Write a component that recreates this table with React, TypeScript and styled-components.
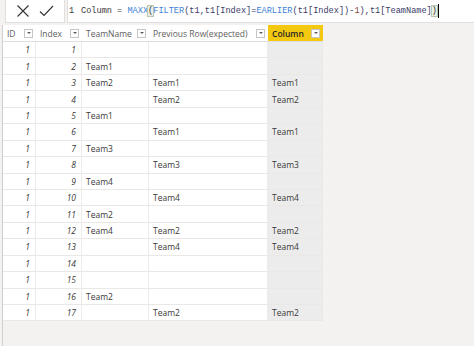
import React from "react";
import styled, { createGlobalStyle } from "styled-components";

const Global = createGlobalStyle`
  html, body { margin: 0; padding: 0; }
  body {
    background: #f3f2f1;
    font-family: "Open Sans", "Noto Sans", Arial, sans-serif;
    width: 474px;
    height: 346px;
    overflow: hidden;
  }
`;

const Page = styled.div`
  display: flex;
  flex-direction: column;
  width: 474px;
  height: 346px;
  overflow: hidden;
`;

const FormulaBar = styled.div`
  display: flex;
  align-items: stretch;
  height: 23px;
  padding-left: 5px;
  gap: 2px;
`;

const CommitBox = styled.div`
  width: 60px;
  background: #ffffff;
  border: 1px solid #e1dfdd;
  border-top: none;
  display: flex;
  align-items: center;
  justify-content: space-around;
  padding: 0 6px;
  box-sizing: border-box;
`;

const Editor = styled.div`
  flex: 1;
  background: #ffffff;
  border: 1px solid #e1dfdd;
  border-top: none;
  border-right: none;
  display: flex;
  align-items: center;
  padding-left: 1px;
  font-family: "Liberation Mono", "DejaVu Sans Mono", monospace;
  font-size: 8.6px;
  color: #3b3a39;
  white-space: pre;
`;

const LineNo = styled.span`
  width: 12px;
  color: #3b3a39;
`;

const Tok = styled.span<{ $kind?: "fn" | "ref" | "num" | "plain" }>`
  color: ${(p) =>
    p.$kind === "fn"
      ? "#3d7fd6"
      : p.$kind === "ref"
      ? "#3a3a66"
      : p.$kind === "num"
      ? "#8a4a3a"
      : "#3b3a39"};
`;

const Match = styled.span`
  background: #e9efe6;
  outline: 1px solid #b7c9b0;
`;

const Caret = styled.span`
  display: inline-block;
  width: 1px;
  height: 14px;
  background: #000;
  margin-left: 1px;
`;

const Viewport = styled.div`
  flex: 1;
  margin-top: 2px;
  margin-left: 2px;
  border-left: 1px solid #d2d0ce;
`;

const COLS = "33px 46px 67px 119px 55px";

const HeaderRow = styled.div`
  display: grid;
  grid-template-columns: ${COLS};
  height: 17px;
  background: #ffffff;
  width: 320px;
`;

const HeaderCell = styled.div<{ $selected?: boolean }>`
  display: flex;
  align-items: center;
  justify-content: space-between;
  padding: 0 3px 0 4px;
  box-sizing: border-box;
  font-size: 8.5px;
  color: ${(p) => (p.$selected ? "#252423" : "#605e5c")};
  background: ${(p) => (p.$selected ? "#f2c811" : "#ffffff")};
  font-weight: ${(p) => (p.$selected ? 600 : 400)};
  border-bottom: 1px solid #e1dfdd;
  white-space: nowrap;
`;

const Drop = styled.span`
  width: 9px;
  height: 9px;
  box-sizing: border-box;
  border: 1px solid #c8c6c4;
  background: #ffffff;
  display: flex;
  align-items: center;
  justify-content: center;
  flex: none;
  &::after {
    content: "";
    border-left: 2px solid transparent;
    border-right: 2px solid transparent;
    border-top: 2px solid #605e5c;
  }
`;

const Row = styled.div`
  display: grid;
  grid-template-columns: ${COLS};
  height: 16.45px;
  width: 320px;
`;

const Cell = styled.div<{ $num?: boolean; $selected?: boolean }>`
  display: flex;
  align-items: center;
  justify-content: ${(p) => (p.$num ? "flex-end" : "flex-start")};
  padding: ${(p) => (p.$num ? "0 5px 0 0" : "0 0 0 4px")};
  box-sizing: border-box;
  font-size: 8.5px;
  font-style: ${(p) => (p.$num ? "italic" : "normal")};
  color: #3b3a39;
  background: ${(p) => (p.$selected ? "#ececec" : "#ffffff")};
  border-bottom: 1px solid #e9e8e7;
  border-right: 1px solid #ecebea;
  white-space: nowrap;
`;

const Icon = styled.svg`
  display: block;
`;

type R = [number, number, string, string, string];
const rows: R[] = [
  [1, 1, "", "", ""],
  [1, 2, "Team1", "", ""],
  [1, 3, "Team2", "Team1", "Team1"],
  [1, 4, "", "Team2", "Team2"],
  [1, 5, "Team1", "", ""],
  [1, 6, "", "Team1", "Team1"],
  [1, 7, "Team3", "", ""],
  [1, 8, "", "Team3", "Team3"],
  [1, 9, "Team4", "", ""],
  [1, 10, "", "Team4", "Team4"],
  [1, 11, "Team2", "", ""],
  [1, 12, "Team4", "Team2", "Team2"],
  [1, 13, "", "Team4", "Team4"],
  [1, 14, "", "", ""],
  [1, 15, "", "", ""],
  [1, 16, "Team2", "", ""],
  [1, 17, "", "Team2", "Team2"],
];

const headers = ["ID", "Index", "TeamName", "Previous Row(expected)", "Column"];

export default function App() {
  return (
    <Page>
      <Global />
      <FormulaBar>
        <CommitBox>
          <Icon width="14" height="14" viewBox="0 0 14 14">
            <path d="M1.5 1.5 L12.5 12.5 M12.5 1.5 L1.5 12.5" stroke="#323130" strokeWidth="1.1" fill="none" />
          </Icon>
          <Icon width="15" height="12" viewBox="0 0 15 12">
            <path d="M1 6.5 L5 10.5 L14 1" stroke="#323130" strokeWidth="1.1" fill="none" />
          </Icon>
        </CommitBox>
        <Editor>
          <LineNo>1</LineNo>
          <Tok>Column = </Tok>
          <Tok $kind="fn">MAXX</Tok>
          <Match>(</Match>
          <Tok $kind="fn">FILTER</Tok>
          <Tok $kind="ref">(t1,t1[Index]=</Tok>
          <Tok $kind="fn">EARLIER</Tok>
          <Tok $kind="ref">(t1[Index])-</Tok>
          <Tok $kind="num">1</Tok>
          <Tok $kind="ref">),t1[TeamName]</Tok>
          <Match>)</Match>
          <Caret />
        </Editor>
      </FormulaBar>
      <Viewport>
        <HeaderRow>
          {headers.map((h, i) => (
            <HeaderCell key={h} $selected={i === 4}>
              <span>{h}</span>
              <Drop />
            </HeaderCell>
          ))}
        </HeaderRow>
        {rows.map((r) => (
          <Row key={r[1]}>
            <Cell $num>1</Cell>
            <Cell $num>{r[1]}</Cell>
            <Cell>{r[2]}</Cell>
            <Cell>{r[3]}</Cell>
            <Cell $selected>{r[4]}</Cell>
          </Row>
        ))}
      </Viewport>
    </Page>
  );
}
